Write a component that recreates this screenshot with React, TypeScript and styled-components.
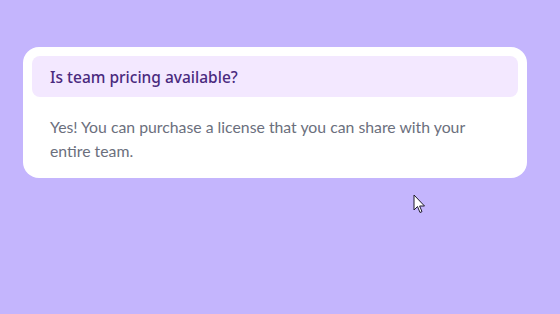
import { FC } from "react";
import styled, { createGlobalStyle } from "styled-components";

const GlobalStyle = createGlobalStyle`
  html, body {
    margin: 0;
    padding: 0;
    background: #c4b5fd;
  }
  body {
    font-family: Lato, "Open Sans", sans-serif;
  }
`;

const Page = styled.div`
  position: relative;
  width: 560px;
  height: 314px;
  padding: 47px 0 0 23px;
  box-sizing: border-box;
`;

const Card = styled.div`
  width: 504px;
  box-sizing: border-box;
  padding: 9px 9px 15px;
  border-radius: 16px;
  background: #ffffff;
`;

const Question = styled.div`
  height: 41px;
  display: flex;
  align-items: center;
  padding: 0 18px;
  border-radius: 8px;
  background: #f3e8ff;
  color: #4a2a7e;
  font-family: "Noto Sans", sans-serif;
  font-size: 15.5px;
  font-weight: 500;
`;

const Answer = styled.p`
  margin: 0;
  padding: 18px 18px 0;
  color: #6b6f7d;
  font-size: 15.8px;
  line-height: 24px;
`;

const Cursor = styled.svg`
  position: absolute;
  left: 413px;
  top: 194px;
`;

export const App: FC = () => {
  return (
    <Page>
      <GlobalStyle />
      <Card>
        <Question>Is team pricing available?</Question>
        <Answer>
          Yes! You can purchase a license that you can share with your entire
          team.
        </Answer>
      </Card>
      <Cursor width="14" height="22" viewBox="0 0 14 22">
        <path
          d="M1 1 L1 16 L4.5 12.5 L7 18.5 L9 17.6 L6.6 12 L11.5 12 Z"
          fill="#ffffff"
          stroke="#1f1b2e"
          strokeWidth="1"
          strokeLinejoin="round"
        />
      </Cursor>
    </Page>
  );
};

export default App;
